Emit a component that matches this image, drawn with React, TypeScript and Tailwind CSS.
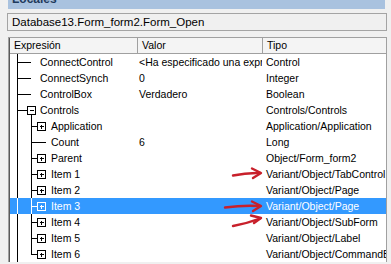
import React from "react";

type Kind = "leaf0" | "open0" | "plus1" | "leaf1" | "plusLast";

type Row = {
  name: string;
  value?: string;
  type: string;
  kind: Kind;
  selected?: boolean;
};

const rows: Row[] = [
  { name: "ConnectControl", value: "<Ha especificado una expresión de control>", type: "Control", kind: "leaf0" },
  { name: "ConnectSynch", value: "0", type: "Integer", kind: "leaf0" },
  { name: "ControlBox", value: "Verdadero", type: "Boolean", kind: "leaf0" },
  { name: "Controls", type: "Controls/Controls", kind: "open0" },
  { name: "Application", type: "Application/Application", kind: "plus1" },
  { name: "Count", value: "6", type: "Long", kind: "leaf1" },
  { name: "Parent", type: "Object/Form_form2", kind: "plus1" },
  { name: "Item 1", type: "Variant/Object/TabControl", kind: "plus1" },
  { name: "Item 2", type: "Variant/Object/Page", kind: "plus1" },
  { name: "Item 3", type: "Variant/Object/Page", kind: "plus1", selected: true },
  { name: "Item 4", type: "Variant/Object/SubForm", kind: "plus1" },
  { name: "Item 5", type: "Variant/Object/Label", kind: "plus1" },
  { name: "Item 6", type: "Variant/Object/CommandButton", kind: "plusLast" },
];

function TreeLines({ kind, selected }: { kind: Kind; selected?: boolean }) {
  const c = selected ? "#ffffff" : "#000000";
  const child = kind === "plus1" || kind === "leaf1" || kind === "plusLast";
  const w = child ? 41 : 30;
  return (
    <svg width={w} height={16} className="shrink-0" shapeRendering="crispEdges">
      <line x1={7.5} y1={0} x2={7.5} y2={16} stroke={c} />
      {kind === "leaf0" && <line x1={7.5} y1={8.5} x2={21} y2={8.5} stroke={c} />}
      {kind === "open0" && (
        <>
          <line x1={7.5} y1={8.5} x2={17} y2={8.5} stroke={c} />
          <rect x={17.5} y={4.5} width={8} height={8} fill="#fff" stroke="#000" />
          <line x1={19.5} y1={8.5} x2={24} y2={8.5} stroke="#000" />
          <line x1={21.5} y1={13} x2={21.5} y2={16} stroke={c} />
        </>
      )}
      {child && (
        <line x1={21.5} y1={0} x2={21.5} y2={kind === "plusLast" ? 9 : 16} stroke={c} />
      )}
      {kind === "leaf1" && <line x1={21.5} y1={8.5} x2={36} y2={8.5} stroke={c} />}
      {(kind === "plus1" || kind === "plusLast") && (
        <>
          <line x1={21.5} y1={8.5} x2={27} y2={8.5} stroke={c} />
          <rect
            x={27.5}
            y={4.5}
            width={8}
            height={8}
            fill={selected ? "none" : "#fff"}
            stroke={selected ? "#ffffff" : "#000"}
          />
          <line x1={29.5} y1={8.5} x2={34} y2={8.5} stroke={selected ? "#fff" : "#000"} />
          <line x1={31.5} y1={6.5} x2={31.5} y2={11} stroke={selected ? "#fff" : "#000"} />
        </>
      )}
    </svg>
  );
}

export default function App() {
  return (
    <div className="relative w-[391px] h-[264px] overflow-hidden bg-[#f0f0f0] font-['Liberation_Sans',Arial,sans-serif] text-black">
      {/* title bar, scrolled off the top */}
      <div className="ml-[8px] w-[377px] h-[9px] overflow-hidden bg-[#a9c2df]">
        <div className="mt-[-7px] pl-[4px] text-[12px] font-bold leading-none text-[#1f3a5c]">Locales</div>
      </div>

      {/* context box */}
      <div className="mt-[4px] ml-[7px] w-[380px] h-[18px] border border-[#a4a4a4] bg-[#f0f0f0] pl-[4px] text-[11.5px] leading-[16px]">
        Database13.Form_form2.Form_Open
      </div>

      {/* list */}
      <div className="mt-[6px] ml-[8px] w-[379px] border-l border-t border-r border-[#a0a0a0] bg-white">
        <div className="border-l border-[#5a5a5a]">
          <div className="flex h-[16px] border-b border-[#a0a0a0] bg-[#f4f4f4] text-[10.5px] leading-[15px]">
            <div className="w-[127px] pl-[4px]">Expresión</div>
            <div className="w-[125px] border-l border-[#a0a0a0] pl-[4px]">Valor</div>
            <div className="flex-1 border-l border-[#a0a0a0] pl-[4px]">Tipo</div>
          </div>
          {rows.map((r) => (
            <div
              key={r.name}
              className={`flex h-[16px] text-[10.5px] leading-[16px] whitespace-nowrap ${
                r.selected ? "bg-[#3399ff] text-white" : ""
              }`}
            >
              <div className="flex w-[127px] shrink-0 overflow-hidden">
                <TreeLines kind={r.kind} selected={r.selected} />
                <span>{r.name}</span>
              </div>
              <div className="w-[125px] shrink-0 overflow-hidden pl-[2px]">{r.value}</div>
              <div className="flex-1 overflow-hidden pl-[4px]">{r.type}</div>
            </div>
          ))}
        </div>
      </div>

      {/* hand-drawn red arrows */}
      <svg
        className="pointer-events-none absolute left-0 top-0"
        width={391}
        height={264}
        fill="none"
        stroke="#c8202b"
        strokeWidth={2.4}
        strokeLinecap="round"
        strokeLinejoin="round"
      >
        <path d="M233 175.5 Q247 172.5 260 173" />
        <path d="M252 168.5 L261 173 L253 178" />
        <path d="M225 207.5 Q243 205 260 206" />
        <path d="M252 201.5 L261 206 L253 211" />
        <path d="M233 226 Q248 223 260 218.5" />
        <path d="M251 215.5 L261 218 L254 223" />
      </svg>
    </div>
  );
}
